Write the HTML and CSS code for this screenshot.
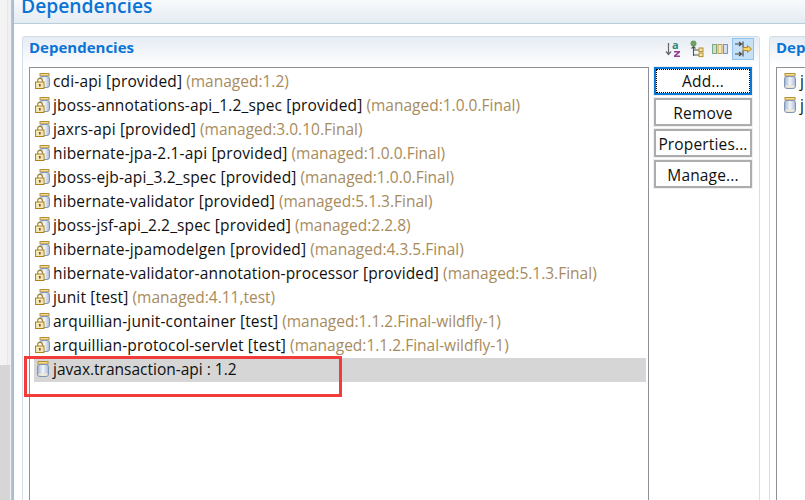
FILE: index.html
```
<!DOCTYPE html>
<html lang="en">
<head>
<meta charset="utf-8">
<title>Dependencies</title>
<link rel="stylesheet" href="styles.css">
</head>
<body>
<svg class="defs" width="0" height="0" aria-hidden="true">
  <defs>
    <linearGradient id="jarBody" x1="0" y1="0" x2="1" y2="0">
      <stop offset="0" stop-color="#9fb2d0"/><stop offset=".5" stop-color="#f2f5fa"/><stop offset="1" stop-color="#a9bad4"/>
    </linearGradient>
    <symbol id="jar" viewBox="0 0 16 18">
      <rect x="4" y="1.500" width="10" height="2.600" fill="#f3dc8e" stroke="#b3913a"/>
      <rect x="3.500" y="4.500" width="11" height="12" rx="2.500" fill="url(#jarBody)" stroke="#8395b5"/>
      <rect x="4.500" y="13.500" width="9" height="2" fill="#f0ead0"/>
    </symbol>
    <symbol id="jarlock" viewBox="0 0 16 18">
      <rect x="6" y="1.500" width="9" height="2.400" fill="#f3dc8e" stroke="#b3913a"/>
      <rect x="5.500" y="4.500" width="10" height="11" rx="2.500" fill="url(#jarBody)" stroke="#8395b5"/>
      <path d="M3.700 10V8.600a2.300 2.300 0 0 1 4.600 0V10" fill="#fff" stroke="#a58334" stroke-width="1.200"/>
      <rect x="1.500" y="10" width="8.500" height="6.500" fill="#f6e6b4" stroke="#a98524"/>
      <rect x="5.100" y="12" width="1.500" height="2.500" fill="#6d4f12"/>
    </symbol>
  </defs>
</svg>
<div class="gutter"></div>
<main class="editor">
  <header class="page-head"><h1>Dependencies</h1></header>
  <div class="columns">
    <section class="panel panel-main">
      <div class="panel-head">
        <h2>Dependencies</h2>
        <div class="tools">
          <span class="tool"><svg width="18" height="18" viewBox="0 0 18 18"><path d="M3.500 3v11M1 11.500l2.500 3 2.500-3" fill="none" stroke="#666" stroke-width="1.200"/><text x="7" y="8.500" class="ic-a">a</text><path d="M9 11h6v1.400l-3.600 3.200H15v1.400H9v-1.400l3.600-3.200H9z" fill="#953f95"/></svg></span>
          <span class="tool"><svg width="18" height="18" viewBox="0 0 18 18"><circle cx="5.500" cy="3.500" r="3" fill="#6aa35f"/><path d="M5.500 7v9M5.500 10H11M5.500 15H11M3.500 8.500l2-2 2 2" fill="none" stroke="#555" stroke-width="1.100"/><rect x="11" y="8" width="4" height="3.600" fill="#f4e4a2" stroke="#b48f2f"/><rect x="11" y="13" width="4" height="3.600" fill="#f4e4a2" stroke="#b48f2f"/></svg></span>
          <span class="tool"><svg width="18" height="18" viewBox="0 0 18 18"><rect x="1.500" y="4.500" width="4" height="9" fill="#cfe0c2" stroke="#7fa58a"/><rect x="7" y="4.500" width="4" height="9" fill="#f4e7b4" stroke="#c2a14a"/><rect x="12.500" y="4.500" width="4" height="9" fill="#d5dfef" stroke="#7f95bb"/></svg></span>
          <span class="tool tool-on"><svg width="18" height="18" viewBox="0 0 18 18"><path d="M1 4h6M5 2l2.500 2L5 6M1 14h6M5 12l2.500 2L5 16M9 1.500v6M9 10.500v6" fill="none" stroke="#444" stroke-width="1.100"/><path d="M9 7.500h4.500V5.500L17.500 9l-4 3.500v-2H9z" fill="#f6d568" stroke="#b9861f" stroke-width="1"/></svg></span>
        </div>
      </div>
      <div class="panel-body">
        <ul class="tree">
          <li class="row"><svg class="ic"><use href="#jarlock"/></svg><span class="nm">cdi-api [provided]</span> <span class="mg">(managed:1.2)</span></li>
          <li class="row"><svg class="ic"><use href="#jarlock"/></svg><span class="nm">jboss-annotations-api_1.2_spec [provided]</span> <span class="mg">(managed:1.0.0.Final)</span></li>
          <li class="row"><svg class="ic"><use href="#jarlock"/></svg><span class="nm">jaxrs-api [provided]</span> <span class="mg">(managed:3.0.10.Final)</span></li>
          <li class="row"><svg class="ic"><use href="#jarlock"/></svg><span class="nm">hibernate-jpa-2.1-api [provided]</span> <span class="mg">(managed:1.0.0.Final)</span></li>
          <li class="row"><svg class="ic"><use href="#jarlock"/></svg><span class="nm">jboss-ejb-api_3.2_spec [provided]</span> <span class="mg">(managed:1.0.0.Final)</span></li>
          <li class="row"><svg class="ic"><use href="#jarlock"/></svg><span class="nm">hibernate-validator [provided]</span> <span class="mg">(managed:5.1.3.Final)</span></li>
          <li class="row"><svg class="ic"><use href="#jarlock"/></svg><span class="nm">jboss-jsf-api_2.2_spec [provided]</span> <span class="mg">(managed:2.2.8)</span></li>
          <li class="row"><svg class="ic"><use href="#jarlock"/></svg><span class="nm">hibernate-jpamodelgen [provided]</span> <span class="mg">(managed:4.3.5.Final)</span></li>
          <li class="row"><svg class="ic"><use href="#jarlock"/></svg><span class="nm">hibernate-validator-annotation-processor [provided]</span> <span class="mg">(managed:5.1.3.Final)</span></li>
          <li class="row"><svg class="ic"><use href="#jarlock"/></svg><span class="nm">junit [test]</span> <span class="mg">(managed:4.11,test)</span></li>
          <li class="row"><svg class="ic"><use href="#jarlock"/></svg><span class="nm">arquillian-junit-container [test]</span> <span class="mg">(managed:1.1.2.Final-wildfly-1)</span></li>
          <li class="row"><svg class="ic"><use href="#jarlock"/></svg><span class="nm">arquillian-protocol-servlet [test]</span> <span class="mg">(managed:1.1.2.Final-wildfly-1)</span></li>
          <li class="row row-sel"><svg class="ic"><use href="#jar"/></svg><span>javax.transaction-api : 1.2</span></li>
        </ul>
        <div class="buttons">
          <button class="btn btn-focus"><span>Add...</span></button>
          <button class="btn">Remove</button>
          <button class="btn">Properties...</button>
          <button class="btn">Manage...</button>
        </div>
      </div>
      <div class="annotation"></div>
    </section>
    <section class="panel panel-side">
      <div class="panel-head"><h2>Dep</h2></div>
      <div class="panel-body">
        <ul class="tree tree-side">
          <li class="row"><svg class="ic"><use href="#jar"/></svg><span>j</span></li>
          <li class="row"><svg class="ic"><use href="#jar"/></svg><span>j</span></li>
        </ul>
      </div>
    </section>
  </div>
</main>
</body>
</html>
```
FILE: styles.css
```
* { box-sizing: border-box; }
html, body { height: 100%; }
body {
  margin: 0;
  display: flex;
  height: 500px;
  width: 805px;
  overflow: hidden;
  background: #fff;
  font-family: "Open Sans", "Noto Sans", "Liberation Sans", sans-serif;
  font-size: 15.500px;
  color: #101010;
}
.defs { position: absolute; }
.gutter {
  width: 14px;
  flex: none;
  background:
    linear-gradient(#d6d6d6, #d6d6d6) 0 365px / 10px 135px no-repeat,
    linear-gradient(to right, #f3f3f3 0, #f3f3f3 7px, #dcdcdc 7px, #f0f0f0 8px, #f0f0f0 11px, #b7c9dc 11px, #a2b7cd 14px);
}
.editor { flex: 1; min-width: 0; display: flex; flex-direction: column; }
.page-head {
  height: 24px;
  flex: none;
  padding-left: 7px;
  border-bottom: 1px solid #b9cddd;
  background: linear-gradient(to bottom, #f8fafc, #e4ebf3);
}
.page-head h1 {
  margin: -7px 0 0;
  font-size: 19.300px;
  line-height: 26px;
  font-weight: 600;
  color: #0a74d6;
}
.columns { flex: 1; min-height: 0; display: flex; gap: 9px; padding: 12px 0 0 8px; }
.panel {
  display: flex;
  flex-direction: column;
  position: relative;
  border-top: 1px solid #cfdbe6;
  border-left: 1px solid #d6e0ea;
  border-top-left-radius: 3px;
}
.panel-main { width: 738px; flex: none; border-right: 1px solid #d6e0ea; border-top-right-radius: 3px; }
.panel-side { flex: none; width: 60px; }
.panel-head {
  height: 30px;
  flex: none;
  display: flex;
  align-items: center;
  justify-content: space-between;
  padding: 0 5px 0 6px;
  background: linear-gradient(to bottom, #e6ecf4, #fff);
}
.panel-head h2 { margin: 0 0 10px; font-size: 15px; line-height: 20px; font-weight: 700; color: #0a74d6; }
.tools { display: flex; align-items: center; gap: 1px; margin-bottom: 6px; }
.tool { width: 22px; height: 22px; display: flex; align-items: center; justify-content: center; }
.tool-on { background: #c5e0f7; border: 1px solid #8fc3ee; }
.ic-a { font: 700 11px "Open Sans", sans-serif; fill: #2e8a80; }
.panel-body { flex: 1; min-height: 0; display: flex; gap: 5px; padding-left: 6px; }
.tree {
  width: 620px;
  flex: none;
  margin: 0;
  padding: 2px 2px 0 4px;
  list-style: none;
  border: 1px solid #8f8f98;
  border-bottom: 0;
  background: #fff;
}
.tree-side { width: 60px; }
.row { height: 24px; display: flex; align-items: center; white-space: pre; padding-bottom: 2px; }
.row-sel { background: #d6d6d6; height: 23.500px; }
.ic { width: 16px; height: 18px; flex: none; margin-right: 3px; }
.nm { letter-spacing: .15px; }
.mg { color: #a88b5c; margin-left: 4px; }
.buttons { width: 98px; flex: none; display: flex; flex-direction: column; gap: 3px; }
.btn {
  height: 28px;
  padding: 2px 0 0;
  border: 2px solid #adadad;
  outline: 1px solid #efefef;
  background: #fff;
  font: inherit;
  letter-spacing: .15px;
  color: #101010;
}
.btn-focus { border-color: #0a78d7; display: flex; padding: 0; }
.btn-focus span {
  flex: 1;
  border: 1px dotted #000;
  line-height: 22px;
}
.annotation {
  position: absolute;
  left: 1px;
  top: 319px;
  width: 318px;
  height: 41px;
  border: 3px solid #f23c3c;
  pointer-events: none;
}
```
